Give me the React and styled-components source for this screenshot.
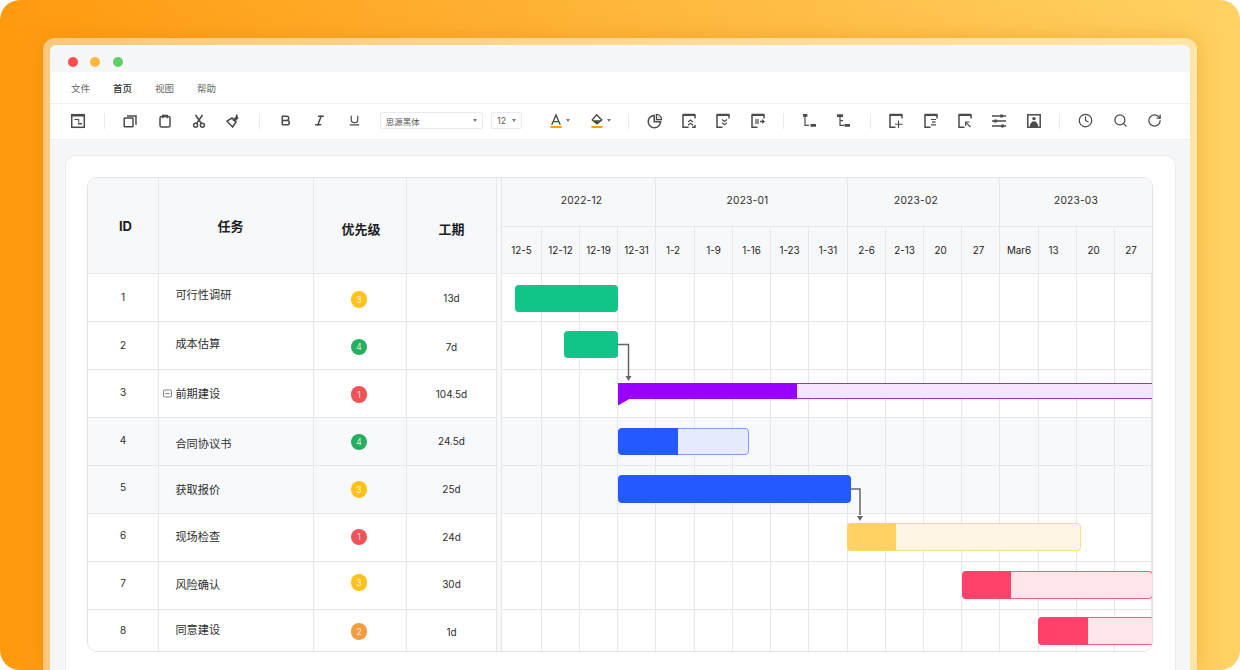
import styled, { createGlobalStyle } from "styled-components";
import { Bold, Clock, Italic, RotateCw, Search, Underline } from "lucide-react";

const FONT = `Inter, "Noto Sans CJK SC", sans-serif`;
const LINE = "#e6e7eb";
const HEAD_BG = "#f7f8fa";

const GlobalStyle = createGlobalStyle`
  html, body {
    margin: 0;
    background: #fff;
    overflow: hidden;
  }
  body {
    font-family: ${FONT};
    color: #333;
  }
`;

const Stage = styled.div`
  width: 1240px;
  height: 670px;
  box-sizing: border-box;
  padding: 38px 43px 0;
  border-radius: 20px;
  overflow: hidden;
  background: linear-gradient(90deg, #ff9a0f 0%, #ffb93f 55%, #ffd263 100%);
`;

const Frame = styled.div`
  height: 100%;
  box-sizing: border-box;
  padding: 7px 7px 0;
  border-radius: 12px 12px 0 0;
  background: rgba(255, 255, 255, 0.45);
  box-shadow: 0 0 22px rgba(205, 120, 0, 0.35);
`;

const Window = styled.div`
  height: 100%;
  display: flex;
  flex-direction: column;
  border-radius: 6px 6px 0 0;
  overflow: hidden;
  background: #f6f7f9;
`;

const TitleBar = styled.div`
  height: 27px;
  flex: none;
  display: flex;
  align-items: center;
  gap: 12.7px;
  padding: 6px 0 0 17.7px;
  box-sizing: border-box;
`;

const Light = styled.span`
  width: 10px;
  height: 10px;
  border-radius: 50%;
  background: ${(p) => p.$color};
`;

const MenuBar = styled.div`
  height: 32px;
  flex: none;
  box-sizing: border-box;
  display: flex;
  align-items: center;
  gap: 23px;
  padding: 0 0 0 21px;
  background: #fff;
  border-bottom: 1px solid #f0f1f3;
`;

const MenuItem = styled.span`
  font-size: 9.5px;
  color: ${(p) => (p.$active ? "#2f2f2f" : "#666")};
  font-weight: ${(p) => (p.$active ? 500 : 400)};
`;

const Toolbar = styled.div`
  height: 36px;
  flex: none;
  box-sizing: border-box;
  display: flex;
  align-items: center;
  padding: 0 0 2px 11px;
  background: #fff;
  border-bottom: 1px solid #eff0f2;
`;

const ToolIcon = styled.span`
  width: 34.4px;
  height: 20px;
  flex: none;
  display: flex;
  align-items: center;
  justify-content: center;
  color: #4a4a4a;
`;

const Divider = styled.span`
  width: 1px;
  height: 16px;
  flex: none;
  margin: 0 8.3px;
  background: #e9eaed;
`;

const Select = styled.div`
  width: ${(p) => p.$width}px;
  height: 17px;
  flex: none;
  box-sizing: border-box;
  margin-left: 8.5px;
  padding: 0 5px;
  display: flex;
  align-items: center;
  justify-content: space-between;
  border: 1px solid #e9eaed;
  border-radius: 2px;
  font-size: 8.5px;
  color: #555;
`;

const Caret = styled.i`
  width: 0;
  height: 0;
  flex: none;
  border-left: 2.5px solid transparent;
  border-right: 2.5px solid transparent;
  border-top: 3px solid #777;
`;

const ColorTool = styled.span`
  width: ${(p) => p.$width}px;
  height: 20px;
  flex: none;
  display: flex;
  align-items: center;
  gap: 2px;
  margin-left: ${(p) => p.$gap || 0}px;
  padding-left: 8px;
  box-sizing: border-box;
`;

const Content = styled.div`
  flex: 1;
  min-height: 0;
  padding: 15px 14px 0 15px;
`;

const Card = styled.div`
  height: 100%;
  box-sizing: border-box;
  padding: 21px 21px 0;
  background: #fff;
  border: 1px solid #e9eaed;
  border-bottom: none;
  border-radius: 10px 10px 0 0;
`;

const Table = styled.div`
  width: 1066px;
  height: 475px;
  box-sizing: border-box;
  display: flex;
  border: 1px solid #e1e2e6;
  border-radius: 10px;
  overflow: hidden;
`;

const TaskPane = styled.div`
  width: 408px;
  flex: none;
  display: flex;
  flex-direction: column;
`;

const Splitter = styled.div`
  width: 6px;
  flex: none;
  box-sizing: border-box;
  background: ${HEAD_BG};
  border-left: 1px solid ${LINE};
  border-right: 1px solid ${LINE};
`;

const ChartPane = styled.div`
  width: 650px;
  flex: none;
  display: flex;
  flex-direction: column;
`;

const TASK_COLUMNS = "71px 155px 93px 89px";

const HeadRow = styled.div`
  height: 96px;
  flex: none;
  box-sizing: border-box;
  display: grid;
  grid-template-columns: ${TASK_COLUMNS};
  background: ${HEAD_BG};
  border-bottom: 1px solid ${LINE};
`;

const HeadCell = styled.div`
  display: flex;
  align-items: center;
  justify-content: center;
  box-sizing: border-box;
  padding: ${(p) => p.$pad || "0"};
  border-right: 1px solid ${LINE};
  font-size: 13px;
  font-weight: 700;
  color: #1d1d1f;
  &:last-child {
    border-right: none;
  }
`;

const Row = styled.div`
  height: ${(p) => (p.$last ? "41px" : "48px")};
  flex: none;
  box-sizing: border-box;
  display: grid;
  grid-template-columns: ${TASK_COLUMNS};
  background: ${(p) => (p.$shaded ? "#f8f9fd" : "#fff")};
  border-bottom: ${(p) => (p.$last ? "none" : `1px solid ${LINE}`)};
`;

// dy: how far the content sits off the row centre
const shift = (dy = 0) => {
  const off = dy - 0.5;
  return off < 0 ? `padding-bottom: ${-off * 2}px;` : `padding-top: ${off * 2}px;`;
};

const Cell = styled.div`
  display: flex;
  align-items: center;
  justify-content: center;
  box-sizing: border-box;
  border-right: 1px solid ${LINE};
  font-size: 10px;
  color: #2c2c2c;
  ${(p) => shift(p.$dy)}
  &:last-child {
    border-right: none;
  }
`;

const NameCell = styled(Cell)`
  justify-content: flex-start;
  padding-left: 4px;
  font-size: 11.2px;
`;

const ToggleSlot = styled.span`
  width: 12.4px;
  height: 9px;
  flex: none;
  display: flex;
  color: #666;
`;

const Badge = styled.span`
  width: 16.5px;
  height: 16.5px;
  margin-right: 2px;
  border-radius: 50%;
  display: flex;
  align-items: center;
  justify-content: center;
  font-size: 8.5px;
  color: rgba(255, 255, 255, 0.85);
  background: ${(p) => p.$color};
`;

const MonthRow = styled.div`
  height: 49px;
  flex: none;
  box-sizing: border-box;
  display: flex;
  background: ${HEAD_BG};
  border-bottom: 1px solid ${LINE};
`;

const MonthCell = styled.div`
  width: ${(p) => p.$width}px;
  flex: none;
  box-sizing: border-box;
  display: flex;
  align-items: center;
  justify-content: center;
  padding: ${(p) => p.$pad};
  border-right: 1px solid ${LINE};
  font-size: 10.2px;
  letter-spacing: 0.2px;
  color: #2c2c2c;
  &:last-child {
    border-right: none;
  }
`;

const WeekRow = styled.div`
  height: 47px;
  flex: none;
  box-sizing: border-box;
  display: flex;
  background: ${HEAD_BG};
  border-bottom: 1px solid ${LINE};
`;

const WeekCell = styled.div`
  width: ${(p) => p.$width}px;
  flex: none;
  box-sizing: border-box;
  display: flex;
  align-items: center;
  justify-content: center;
  padding-right: ${(p) => p.$pad || 0}px;
  border-right: 1px solid ${LINE};
  font-size: 9.8px;
  color: #222;
  &:last-child {
    border-right: none;
  }
`;

const Timeline = styled.div`
  position: relative;
  flex: 1;
  min-height: 0;
`;

const Lane = styled.div`
  position: relative;
  height: ${(p) => (p.$last ? "41px" : "48px")};
  box-sizing: border-box;
  display: flex;
  background: ${(p) => (p.$shaded ? "#f8f9fd" : "#fff")};
  border-bottom: ${(p) => (p.$last ? "none" : `1px solid ${LINE}`)};
`;

const GridCell = styled.div`
  width: ${(p) => p.$width}px;
  flex: none;
  box-sizing: border-box;
  border-right: 1px solid ${LINE};
  &:last-of-type {
    border-right: none;
  }
`;

const Bar = styled.div`
  position: absolute;
  top: ${(p) => p.$top}px;
  left: ${(p) => p.$left}px;
  width: ${(p) => p.$width}px;
  height: ${(p) => p.$height}px;
  display: flex;
  overflow: hidden;
  border-radius: 4px;
`;

const BarFill = styled.div`
  width: ${(p) => p.$width}px;
  flex: none;
  background: ${(p) => p.$color};
`;

const BarRest = styled.div`
  flex: 1;
  box-sizing: border-box;
  border-radius: 0 4px 4px 0;
  background: ${(p) => p.$color};
  border: 1px solid ${(p) => p.$line};
  border-left: none;
`;

const SummaryBar = styled.div`
  position: absolute;
  top: 13px;
  left: 115.7px;
  right: 0;
  height: 16px;
  box-sizing: border-box;
  display: flex;
  background: #f5e6fd;
  border-top: 1px solid #9b30e8;
  border-bottom: 1px solid #9b30e8;
`;

const SummaryFill = styled.div`
  width: 179.3px;
  flex: none;
  margin: -1px 0;
  background: #9900ff;
`;

const SummaryNotch = styled.svg`
  position: absolute;
  top: 28px;
  left: 115.7px;
`;

const Links = styled.svg`
  position: absolute;
  inset: 0;
  pointer-events: none;
`;

const Stroke = ({ children }) => (
  <svg width="16" height="16" viewBox="0 0 16 16" fill="none" stroke="currentColor" strokeWidth="1.5">
    {children}
  </svg>
);

const PANEL_TOP = (
  <>
    <path d="M1.5 1.8h13" strokeWidth="2.2" />
    <path d="M2 2v12.3h5.5" />
    <path d="M14 2v3.5" />
  </>
);

const ICONS = {
  save: (
    <>
      <rect x="1.7" y="1.7" width="12.6" height="12.6" />
      <path d="M1.7 2.6h12.6" strokeWidth="2" />
      <path d="M4.5 6.5h4.2v3" strokeWidth="1.1" />
      <path d="M8 10.8h4" strokeWidth="1.6" />
    </>
  ),
  copy: (
    <>
      <rect x="2.2" y="5" width="8.8" height="8.8" rx="0.6" />
      <path d="M5 3h9v8.8" />
    </>
  ),
  paste: (
    <>
      <rect x="3" y="3.6" width="10" height="10.4" rx="1.6" />
      <path d="M5.8 5.2V2.4h4.4v2.8" />
    </>
  ),
  cut: (
    <>
      <circle cx="4.6" cy="12.3" r="2" />
      <circle cx="11.4" cy="12.3" r="2" />
      <path d="M5.6 10.5 11.5 2M10.4 10.5 4.5 2" />
    </>
  ),
  brush: (
    <>
      <path d="M2 8.2 7 5l4 4-3.4 5z" />
      <path d="M7.6 7 11.5 3.2l1.7 1.7-3.4 3.8" fill="currentColor" strokeWidth="1" />
      <path d="M11.8 1.5v3" strokeWidth="1.6" />
    </>
  ),
  pie: (
    <>
      <path d="M7.2 2.4a6.2 6.2 0 1 0 6.4 6.4H7.2z" />
      <path d="M9.4 1.4v5.2h5.2a5.4 5.4 0 0 0-5.2-5.2z" fill="#ddd" strokeWidth="1.2" />
    </>
  ),
  moveUp: (
    <>
      {PANEL_TOP}
      <path d="M14 12v2.3h-3" />
      <path d="M7 9l2.5-2L12 9M7 12.2l2.5-2 2.5 2" strokeWidth="1.1" />
    </>
  ),
  moveDown: (
    <>
      {PANEL_TOP}
      <path d="M7 6.5l2.5 2 2.5-2M7 9.8l2.5 2 2.5-2" strokeWidth="1.1" />
    </>
  ),
  moveRight: (
    <>
      {PANEL_TOP}
      <path d="M6 6v5M8 6v5" strokeWidth="1.2" />
      <path d="M10 8.5h2.4" strokeWidth="1.6" />
      <path d="M12.2 6 15 8.5 12.2 11z" fill="currentColor" stroke="none" />
    </>
  ),
  treeA: (
    <>
      <path d="M1 2.4h4.4" strokeWidth="2.6" />
      <path d="M3 3v9.3h4" strokeWidth="1.2" />
      <path d="M8.5 12.4H14" strokeWidth="2.8" />
    </>
  ),
  treeB: (
    <>
      <path d="M1 2.6h6" strokeWidth="2.6" />
      <path d="M4 4v8.3h4M4 7.6h3" strokeWidth="1.2" />
      <path d="M8.5 12.4H14" strokeWidth="2.8" />
    </>
  ),
  addPanel: (
    <>
      {PANEL_TOP}
      <path d="M10.5 7.5v7.5M7 11.3h7.5" strokeWidth="1.1" />
    </>
  ),
  indentPanel: (
    <>
      {PANEL_TOP}
      <path d="M8 6.5h5M9 9.2h3.5M8 11.8h5" strokeWidth="1.2" />
    </>
  ),
  outPanel: (
    <>
      {PANEL_TOP}
      <path d="M13.5 14 8.8 9.3M8.6 13V9h4" strokeWidth="1.1" />
    </>
  ),
  sliders: (
    <>
      <path d="M1 3h14M1 8h14M1 13h14" strokeWidth="1.3" />
      <path d="M10.5 1.5v3M4.5 6.5v3M11.5 11.5v3" strokeWidth="2.6" />
    </>
  ),
  portrait: (
    <>
      <rect x="1.8" y="1.8" width="12.4" height="12.4" strokeWidth="1.5" />
      <circle cx="8" cy="5.6" r="1.7" fill="currentColor" stroke="none" />
      <path d="M4 14V11.4L6.2 8.4h3.6L12 11.4V14z" fill="currentColor" stroke="none" />
    </>
  ),
};

const Glyph = ({ name }) => (
  <ToolIcon>
    <Stroke>{ICONS[name]}</Stroke>
  </ToolIcon>
);

const Lucide = ({ icon: Icon, size = 15, weight = 2 }) => (
  <ToolIcon>
    <Icon size={size} strokeWidth={weight} />
  </ToolIcon>
);

const TextColorIcon = () => (
  <svg width="16" height="16" viewBox="0 0 16 16" fill="none">
    <path d="M3.8 11.8 8 2l4.2 9.8M5.2 8.6h5.6" stroke="#4a4a4a" strokeWidth="1.4" />
    <rect x="2.4" y="13" width="11.2" height="2" fill="#ff9d0a" />
  </svg>
);

const FillColorIcon = () => (
  <svg width="16" height="16" viewBox="0 0 16 16" fill="none">
    <path d="M7.6 1.8 12.8 7 8 11 3.2 7z" stroke="#4a4a4a" strokeWidth="1.3" />
    <path d="M3.4 7.2h9.2L8 11z" fill="#4a4a4a" />
    <rect x="2.4" y="13" width="11.2" height="2" fill="#ff9d0a" />
  </svg>
);

const months = [
  { label: "2022-12", width: 154, pad: "0 0 4px 6px" },
  { label: "2023-01", width: 192, pad: "0 8px 4px 0" },
  { label: "2023-02", width: 152, pad: "0 15px 4px 0" },
  { label: "2023-03", width: 152, pad: "0 0 4px 0" },
];

const weeks = [
  { label: "12-5", width: 40 },
  { label: "12-12", width: 38 },
  { label: "12-19", width: 38 },
  { label: "12-31", width: 38 },
  { label: "1-2", width: 39, pad: 4 },
  { label: "1-9", width: 38 },
  { label: "1-16", width: 38 },
  { label: "1-23", width: 38 },
  { label: "1-31", width: 39 },
  { label: "2-6", width: 38 },
  { label: "2-13", width: 38 },
  { label: "20", width: 38, pad: 4 },
  { label: "27", width: 38, pad: 4 },
  { label: "Mar6", width: 39 },
  { label: "13", width: 38, pad: 8 },
  { label: "20", width: 38, pad: 4 },
  { label: "27", width: 37, pad: 5 },
];

const YELLOW = "#ffc21a";
const GREEN = "#26ae5f";
const RED = "#ef5358";
const ORANGE = "#f59b42";

const tasks = [
  { id: 1, name: "可行性调研", level: 3, color: YELLOW, days: "13d", dy: [0, -3, 2.5, 1] },
  { id: 2, name: "成本估算", level: 4, color: GREEN, days: "7d", dy: [0, -2.5, 2, 1.5] },
  { id: 3, name: "前期建设", level: 1, color: RED, days: "104.5d", dy: [-1, 0, 1.5, 1], group: true },
  { id: 4, name: "合同协议书", level: 4, color: GREEN, days: "24.5d", dy: [-1, 2, 1, 0], shaded: true },
  { id: 5, name: "获取报价", level: 3, color: YELLOW, days: "25d", dy: [-2, 0, 0.5, 0], shaded: true },
  { id: 6, name: "现场检查", level: 1, color: RED, days: "24d", dy: [-2, -1, 0, 0] },
  { id: 7, name: "风险确认", level: 3, color: YELLOW, days: "30d", dy: [-2.5, -1, -2.5, -1] },
  { id: 8, name: "同意建设", level: 2, color: ORANGE, days: "1d", dy: [0, -1.5, 1.5, 1.5] },
];

// one bar per lane, x measured from the left edge of the timeline
const BLUE_BAR = { rest: "#e5ebfd", line: "#7f9dff", fill: "#2459ff" };
const AMBER_BAR = { rest: "#fff5e6", line: "#ffdb85", fill: "#ffd263" };
const PINK_BAR = { rest: "#fee6eb", line: "#ff5c7e", fill: "#ff4269" };

const bars = {
  1: { top: 11, left: 13.3, width: 102.4, height: 27, fillWidth: 102.4, fill: "#10c588" },
  2: { top: 9, left: 62.3, width: 53.4, height: 27, fillWidth: 53.4, fill: "#10c588" },
  4: { top: 10, left: 115.5, width: 131, height: 27, fillWidth: 60.5, ...BLUE_BAR },
  5: { top: 9, left: 115.5, width: 233.5, height: 28, fillWidth: 233.5, fill: "#2459ff" },
  6: { top: 9, left: 345, width: 234, height: 28, fillWidth: 49, ...AMBER_BAR },
  7: { top: 9, left: 459.5, width: 191, height: 28, fillWidth: 49.5, ...PINK_BAR },
  8: { top: 7, left: 536, width: 116, height: 28, fillWidth: 50, ...PINK_BAR },
};

const Arrow = ({ d, tipX, tipY }) => (
  <>
    <path d={d} fill="none" stroke="#666" strokeWidth="1.5" />
    <path d={`M${tipX - 3} ${tipY - 5}h6l-3 5z`} fill="#666" />
  </>
);

const TaskBar = ({ bar }) => (
  <Bar $top={bar.top} $left={bar.left} $width={bar.width} $height={bar.height}>
    <BarFill $width={bar.fillWidth} $color={bar.fill} />
    {bar.rest && <BarRest $color={bar.rest} $line={bar.line} />}
  </Bar>
);

const Toggle = () => (
  <svg width="9" height="9" viewBox="0 0 9 9" fill="none" stroke="currentColor" strokeWidth="0.8">
    <rect x="0.5" y="1" width="8" height="7" rx="1" />
    <path d="M2.2 4.5h4.6" />
  </svg>
);

export default function App() {
  return (
    <Stage>
      <GlobalStyle />
      <Frame>
        <Window>
          <TitleBar>
            <Light $color="#ff4d4f" />
            <Light $color="#ffb83d" />
            <Light $color="#5fd068" />
          </TitleBar>
          <MenuBar>
            <MenuItem>文件</MenuItem>
            <MenuItem $active>首页</MenuItem>
            <MenuItem>视图</MenuItem>
            <MenuItem>帮助</MenuItem>
          </MenuBar>
          <Toolbar>
            <Glyph name="save" />
            <Divider />
            <Glyph name="copy" />
            <Glyph name="paste" />
            <Glyph name="cut" />
            <Glyph name="brush" />
            <Divider />
            <Lucide icon={Bold} size={13} weight={2.8} />
            <Lucide icon={Italic} size={13} weight={2.8} />
            <Lucide icon={Underline} size={13} weight={2.2} />
            <Select $width={103}>
              思源黑体
              <Caret />
            </Select>
            <Select $width={31}>
              12
              <Caret />
            </Select>
            <ColorTool $width={41} $gap={18}>
              <TextColorIcon />
              <Caret />
            </ColorTool>
            <ColorTool $width={38.5}>
              <FillColorIcon />
              <Caret />
            </ColorTool>
            <Divider />
            <Glyph name="pie" />
            <Glyph name="moveUp" />
            <Glyph name="moveDown" />
            <Glyph name="moveRight" />
            <Divider />
            <Glyph name="treeA" />
            <Glyph name="treeB" />
            <Divider />
            <Glyph name="addPanel" />
            <Glyph name="indentPanel" />
            <Glyph name="outPanel" />
            <Glyph name="sliders" />
            <Glyph name="portrait" />
            <Divider />
            <Lucide icon={Clock} />
            <Lucide icon={Search} />
            <Lucide icon={RotateCw} />
          </Toolbar>
          <Content>
            <Card>
              <Table>
                <TaskPane>
                  <HeadRow>
                    <HeadCell $pad="0 0 0 5px">ID</HeadCell>
                    <HeadCell $pad="0 11px 0 0">任务</HeadCell>
                    <HeadCell $pad="6px 0 0 2px">优先级</HeadCell>
                    <HeadCell $pad="6px 0 0 0">工期</HeadCell>
                  </HeadRow>
                  {tasks.map((task, i) => (
                    <Row key={task.id} $shaded={task.shaded} $last={i === tasks.length - 1}>
                      <Cell $dy={task.dy[0]}>{task.id}</Cell>
                      <NameCell $dy={task.dy[1]}>
                        <ToggleSlot>{task.group && <Toggle />}</ToggleSlot>
                        {task.name}
                      </NameCell>
                      <Cell $dy={task.dy[2]}>
                        <Badge $color={task.color}>{task.level}</Badge>
                      </Cell>
                      <Cell $dy={task.dy[3]}>{task.days}</Cell>
                    </Row>
                  ))}
                </TaskPane>
                <Splitter />
                <ChartPane>
                  <MonthRow>
                    {months.map((m) => (
                      <MonthCell key={m.label} $width={m.width} $pad={m.pad}>
                        {m.label}
                      </MonthCell>
                    ))}
                  </MonthRow>
                  <WeekRow>
                    {weeks.map((w, i) => (
                      <WeekCell key={i} $width={w.width} $pad={w.pad}>
                        {w.label}
                      </WeekCell>
                    ))}
                  </WeekRow>
                  <Timeline>
                    {tasks.map((task, i) => (
                      <Lane key={task.id} $shaded={task.shaded} $last={i === tasks.length - 1}>
                        {weeks.map((w, j) => (
                          <GridCell key={j} $width={w.width} />
                        ))}
                        {bars[task.id] && <TaskBar bar={bars[task.id]} />}
                        {task.group && (
                          <>
                            <SummaryBar>
                              <SummaryFill />
                            </SummaryBar>
                            <SummaryNotch width="14" height="8" viewBox="0 0 14 8">
                              <path d="M0 0h13L0 7.5z" fill="#9900ff" />
                            </SummaryNotch>
                          </>
                        )}
                      </Lane>
                    ))}
                    <Links width="650" height="378" viewBox="0 0 650 378">
                      <Arrow d="M115.5 70.5H126.5V102" tipX={126.5} tipY={107} />
                      <Arrow d="M349 215H358V241" tipX={358} tipY={247} />
                    </Links>
                  </Timeline>
                </ChartPane>
              </Table>
            </Card>
          </Content>
        </Window>
      </Frame>
    </Stage>
  );
}
